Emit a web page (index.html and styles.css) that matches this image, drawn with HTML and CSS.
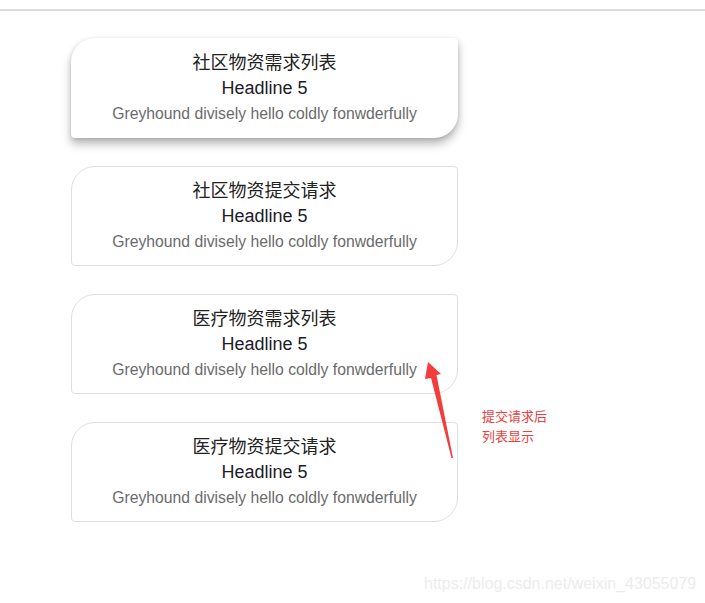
FILE: index.html
```html
<!DOCTYPE html>
<html lang="zh">
<head>
<meta charset="utf-8">
<title>Cards</title>
<link rel="stylesheet" href="styles.css">
</head>
<body>
<div class="topbar"></div>
<main class="list">
  <div class="card raised">
    <div class="title">社区物资需求列表</div>
    <div class="headline">Headline 5</div>
    <div class="sub">Greyhound divisely hello coldly fonwderfully</div>
  </div>
  <div class="card outlined">
    <div class="title">社区物资提交请求</div>
    <div class="headline">Headline 5</div>
    <div class="sub">Greyhound divisely hello coldly fonwderfully</div>
  </div>
  <div class="card outlined">
    <div class="title">医疗物资需求列表</div>
    <div class="headline">Headline 5</div>
    <div class="sub">Greyhound divisely hello coldly fonwderfully</div>
  </div>
  <div class="card outlined">
    <div class="title">医疗物资提交请求</div>
    <div class="headline">Headline 5</div>
    <div class="sub">Greyhound divisely hello coldly fonwderfully</div>
  </div>
</main>
<svg class="arrow" width="40" height="100" viewBox="420 360 40 100">
  <polygon points="428,362 441,374 436.5,375 453,458 451.5,458 431,378 425,379" fill="#f23d3d"/>
</svg>
<div class="note">提交请求后<br>列表显示</div>
<div class="watermark">https://blog.csdn.net/weixin_43055079</div>
</body>
</html>
```
FILE: styles.css
```css
html, body {
  margin: 0;
  padding: 0;
  background: #fff;
  font-family: Arial, "Liberation Sans", "Noto Sans CJK SC", sans-serif;
}
body {
  position: relative;
  width: 705px;
  height: 603px;
  overflow: hidden;
}
.topbar {
  margin-top: 9px;
  height: 2px;
  background: #dcdcdc;
}
.list {
  display: flex;
  flex-direction: column;
  gap: 28px;
  padding: 27px 0 0 71px;
}
.card {
  box-sizing: border-box;
  width: 387px;
  height: 100px;
  padding: 10px 0 0;
  text-align: center;
  background: #fff;
  border-radius: 24px 4px 24px 4px;
}
.raised {
  box-shadow: 0 6px 10px rgba(0,0,0,0.28), 0 1px 4px rgba(0,0,0,0.12);
}
.outlined {
  border: 1px solid #e0e0e0;
  padding-top: 9px;
}
.title {
  font-size: 18px;
  line-height: 27px;
  color: #222;
  font-family: "Noto Sans CJK SC", sans-serif;
}
.headline {
  font-size: 18px;
  line-height: 26px;
  color: #1c1c2a;
}
.sub {
  font-size: 15.75px;
  line-height: 26px;
  color: #6b6b6b;
}
.arrow {
  position: absolute;
  left: 420px;
  top: 360px;
}
.note {
  position: absolute;
  left: 482px;
  top: 406px;
  font-size: 13px;
  line-height: 20px;
  color: #f23d3d;
  font-family: "Noto Sans CJK SC", sans-serif;
}
.watermark {
  position: absolute;
  left: 424px;
  top: 574px;
  font-size: 16px;
  line-height: 20px;
  color: #ececec;
}
```
